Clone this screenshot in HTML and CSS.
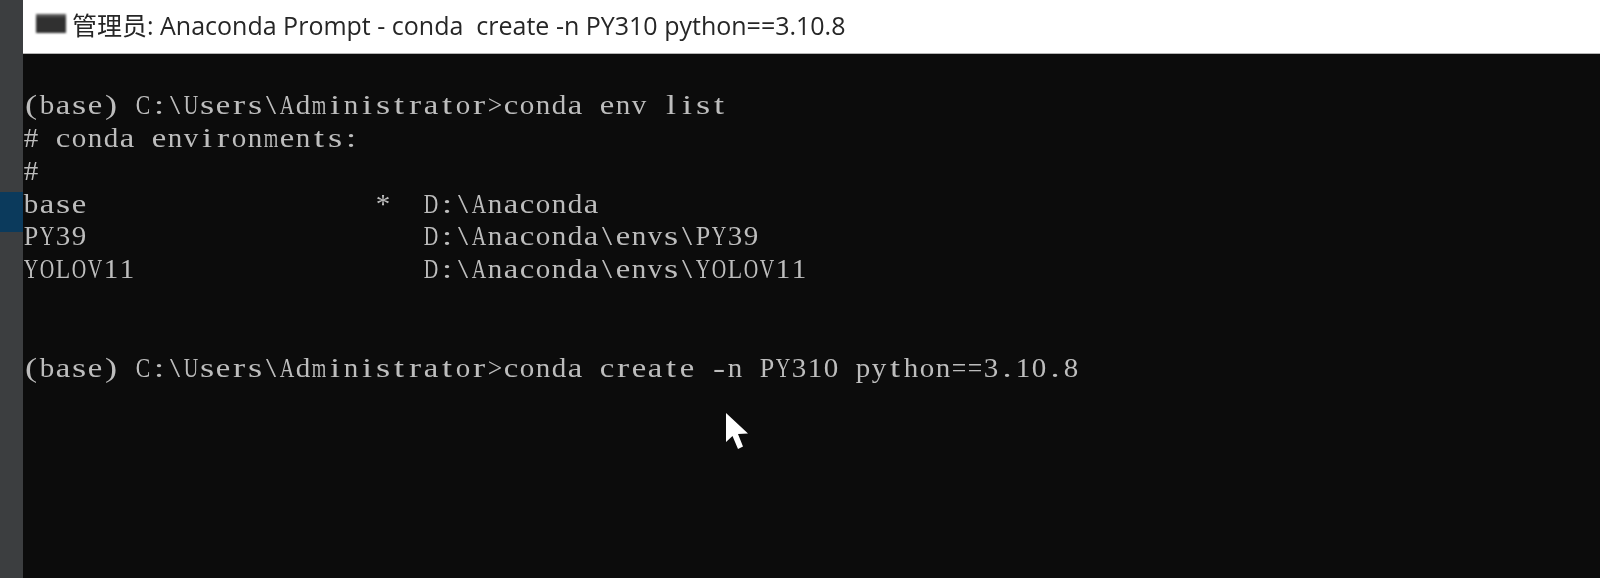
FILE: index.html
```html
<!DOCTYPE html>
<html lang="zh">
<head>
<meta charset="utf-8">
<title>Anaconda Prompt</title>
<link rel="stylesheet" href="styles.css">
</head>
<body>
<div class="screen">
  <aside class="side"><div class="side-active"></div></aside>
  <main class="window">
    <header class="titlebar">
      <svg class="app-icon" width="30" height="19" viewBox="0 0 30 19"><rect width="30" height="19" fill="#303030"/><rect width="30" height="3" fill="#555"/></svg>
      <span class="title">管理员: Anaconda Prompt - conda  create -n PY310 python==3.10.8</span>
    </header>
    <pre class="console" id="console">(base) C:\Users\Administrator&gt;conda env list
# conda environments:
#
base                  *  D:\Anaconda
PY39                     D:\Anaconda\envs\PY39
YOLOV11                  D:\Anaconda\envs\YOLOV11


(base) C:\Users\Administrator&gt;conda create -n PY310 python==3.10.8</pre>
    <svg class="cursor" width="26" height="40" viewBox="0 0 26 40"><path d="M1 0 L1 29 L7.5 23 L13 36 L18 33.5 L13 21 L23 20.5 Z" fill="#fff"/></svg>
  </main>
</div>
<script src="console.js"></script>
</body>
</html>
```
FILE: styles.css
```css
html, body {
  margin: 0;
  height: 100%;
  background: #0c0c0c;
}
.screen {
  display: flex;
  width: 1600px;
  height: 578px;
  overflow: hidden;
}
.side {
  flex: 0 0 23px;
  background: #3c3e40;
  padding-top: 192px;
  box-sizing: border-box;
}
.side-active {
  height: 40px;
  background: #0b3a5c;
}
.window {
  position: relative;
  flex: 1;
  display: flex;
  flex-direction: column;
  background: #0c0c0c;
}
.titlebar {
  flex: 0 0 54px;
  box-sizing: border-box;
  display: flex;
  align-items: center;
  gap: 6px;
  padding: 0 0 6px 13px;
  background: #fff;
  border-bottom: 1px solid #b5b5b5;
}
.app-icon {
  flex: none;
  filter: blur(0.8px);
}
.title {
  font-family: "Open Sans", "Noto Sans CJK SC", sans-serif;
  font-size: 25px;
  color: #262626;
  white-space: pre;
  filter: blur(0.5px);
}
.console {
  margin: 0;
  padding: 35px 0 0 0;
  font-family: "Liberation Serif", "Liberation Mono", monospace;
  font-size: 28px;
  line-height: 32.85px;
  color: #bdbdbd;
  white-space: pre;
  filter: blur(0.5px);
}
.ch {
  display: inline-block;
  width: 16px;
  text-align: center;
  transform-origin: center;
}
.ch-inner {
  display: inline-block;
  margin: 0 -8px;
}
.cursor {
  position: absolute;
  left: 702px;
  top: 413px;
  filter: blur(0.4px);
}
```
FILE: console.js
```js
// Lays the console text out on a 16px character grid, as a terminal does,
// fitting each proportional glyph to the width of its cell.
const con = document.getElementById("console");
const text = con.textContent;
const CELL_INK = 14.5;
const MAX_STRETCH = 1.3;
con.textContent = "";
for (const c of text) {
  if (c === "\n") {
    con.append("\n");
    continue;
  }
  const cell = document.createElement("span");
  cell.className = "ch";
  const inner = document.createElement("span");
  inner.className = "ch-inner";
  inner.textContent = c;
  cell.append(inner);
  con.append(cell);
  if (c === " ") continue;
  const w = inner.getBoundingClientRect().width;
  const scale = Math.min(CELL_INK / w, MAX_STRETCH);
  cell.style.transform = `scaleX(${scale.toFixed(3)})`;
}
```
